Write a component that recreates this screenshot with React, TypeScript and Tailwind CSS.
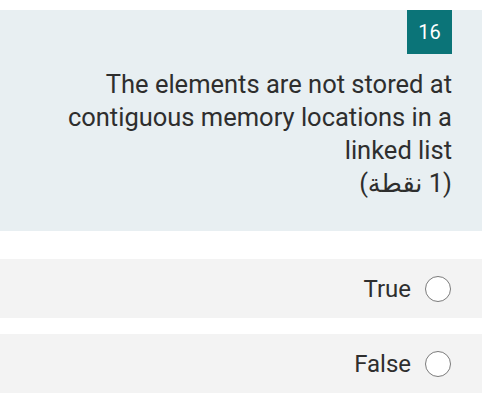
const options = ['True', 'False'];

export default function App() {
  return (
    <div
      className="h-[420px] w-[488px] bg-white pt-[10px] text-[#2e2e2e]"
      style={{ fontFamily: 'Roboto, "DejaVu Sans", sans-serif' }}
    >
      <section dir="rtl" className="w-[482px] bg-[#e8eff2] pb-[31px] pl-[32px] pr-[30px]">
        <div className="flex h-[44px] w-[45px] items-center justify-center bg-[#0b7478] text-[20px] text-white">
          16
        </div>
        <h1 className="mt-[14px] text-right text-[25.5px] leading-[33px]">
          The elements are not stored at contiguous memory locations in a linked list
          <br />
          (1 نقطة)
        </h1>
      </section>

      <div className="mt-[28px] flex flex-col gap-[16px]">
        {options.map((opt) => (
          <label
            key={opt}
            dir="rtl"
            className="flex h-[59px] w-[482px] items-center gap-[14px] bg-[#f3f3f3] pr-[31px]"
          >
            <span className="h-[26px] w-[26px] rounded-full border-[1.5px] border-[#7b7b7b] bg-white" />
            <span className="text-[24px]">{opt}</span>
          </label>
        ))}
      </div>
    </div>
  );
}
